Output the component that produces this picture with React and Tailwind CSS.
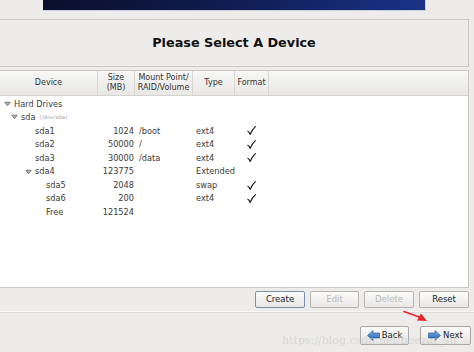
import React from "react";

const F = { fontFamily: '"DejaVu Sans", "Noto Sans", sans-serif' };

function Tri() {
  return (
    <svg width="7" height="6" viewBox="0 0 7 6" className="shrink-0">
      <path d="M0.8 1.2 L6.2 1.2 L3.5 4.8 Z" fill="#b5b5b5" stroke="#666" strokeWidth="0.8" strokeLinejoin="round" />
    </svg>
  );
}

function Check() {
  return (
    <svg width="9" height="9" viewBox="0 0 9 9">
      <path d="M0.8 5.2 C1.8 5.6 2.6 6.6 3.2 8.2 C4.6 5 6.2 2.6 8.4 0.6" fill="none" stroke="#111" strokeWidth="1.1" strokeLinecap="round" />
    </svg>
  );
}

const rows = [
  { tri: true, pad: 4, name: "Hard Drives" },
  { tri: true, pad: 11, name: "sda", sub: "(/dev/sda)" },
  { pad: 35, name: "sda1", size: "1024", mount: "/boot", type: "ext4", fmt: true },
  { pad: 35, name: "sda2", size: "50000", mount: "/", type: "ext4", fmt: true },
  { pad: 35, name: "sda3", size: "30000", mount: "/data", type: "ext4", fmt: true },
  { tri: true, pad: 25, name: "sda4", size: "123775", type: "Extended" },
  { pad: 46, name: "sda5", size: "2048", type: "swap", fmt: true },
  { pad: 46, name: "sda6", size: "200", type: "ext4", fmt: true },
  { pad: 46, name: "Free", size: "121524" },
];

function Btn({ children, disabled, focus, className = "" }) {
  return (
    <div
      className={`h-[17px] rounded-[2px] border flex items-center justify-center text-[8.5px] bg-gradient-to-b from-[#fbfbfa] to-[#e9e8e6] ${
        focus ? "border-[#7b8fa8]" : "border-[#b5b4b2]"
      } ${disabled ? "text-[#b9b8b6]" : "text-[#222]"} ${className}`}
    >
      {children}
    </div>
  );
}

function Arrow({ dir }) {
  return (
    <svg width="13" height="11" viewBox="0 0 13 11" className="shrink-0">
      <defs>
        <linearGradient id={"g" + dir} x1="0" y1="0" x2="0" y2="1">
          <stop offset="0" stopColor="#7fb0e6" />
          <stop offset="1" stopColor="#1f5fb0" />
        </linearGradient>
      </defs>
      {dir === "left" ? (
        <path d="M0.5 5.5 L6 0.5 L6 3 L12.5 3 L12.5 8 L6 8 L6 10.5 Z" fill={`url(#g${dir})`} stroke="#1d4f91" strokeWidth="0.6" />
      ) : (
        <path d="M12.5 5.5 L7 0.5 L7 3 L0.5 3 L0.5 8 L7 8 L7 10.5 Z" fill={`url(#g${dir})`} stroke="#1d4f91" strokeWidth="0.6" />
      )}
    </svg>
  );
}

export default function App() {
  return (
    <div className="w-[474px] h-[352px] bg-[#edecea] overflow-hidden flex flex-col relative" style={F}>
      {/* banner */}
      <div className="h-[11px] ml-[43px] w-[383px] bg-gradient-to-r from-[#0a0f2c] via-[#0f1d52] to-[#1a3388] border-r border-b border-[#c8d0e0]" />
      {/* title */}
      <div className="mt-[8px] h-[48px] mr-[5px] border border-l-0 border-[#c9c8c5] flex items-center justify-center">
        <span className="text-[12.8px] font-bold text-[#111]">Please Select A Device</span>
      </div>
      {/* table */}
      <div className="mt-[3px] h-[218px] mr-[5px] border border-l-0 border-[#c9c8c5] bg-white flex flex-col">
        <div className="h-[25px] flex bg-gradient-to-b from-[#f7f7f6] to-[#e8e7e5] border-b border-[#d4d3d0] text-[8px] text-[#333] leading-[10px]">
          <div className="w-[98px] border-r border-[#d6d5d2] flex items-center justify-center">Device</div>
          <div className="w-[37px] border-r border-[#d6d5d2] flex flex-col items-center justify-center text-center">
            <span>Size</span>
            <span>(MB)</span>
          </div>
          <div className="w-[58px] border-r border-[#d6d5d2] flex flex-col items-center justify-center text-center">
            <span>Mount Point/</span>
            <span>RAID/Volume</span>
          </div>
          <div className="w-[42px] border-r border-[#d6d5d2] flex items-center justify-center">Type</div>
          <div className="w-[34px] border-r border-[#d6d5d2] flex items-center justify-center">Format</div>
        </div>
        <div className="pt-[1px] text-[8.2px] text-[#3a3a3a]">
          {rows.map((r, i) => (
            <div key={i} className="h-[13.55px] flex items-center">
              <div className="w-[98px] flex items-center gap-[3px]" style={{ paddingLeft: r.pad }}>
                {r.tri && <Tri />}
                <span>{r.name}</span>
                {r.sub && <span className="text-[5.5px] text-[#aaa] ml-[1px]">{r.sub}</span>}
              </div>
              <div className="w-[36px] text-right">{r.size}</div>
              <div className="w-[62px] pl-[5px]">{r.mount}</div>
              <div className="w-[51px]">{r.type}</div>
              <div className="w-[12px] flex items-center">{r.fmt && <Check />}</div>
            </div>
          ))}
        </div>
      </div>
      {/* buttons row */}
      <div className="h-[24px] flex items-center justify-end gap-[5px] pr-[5px] border-b border-[#f8f8f7]">
        <Btn focus className="w-[50px]">Create</Btn>
        <Btn disabled className="w-[49px]">Edit</Btn>
        <Btn disabled className="w-[50px]">Delete</Btn>
        <Btn className="w-[50px]">Reset</Btn>
      </div>
      <div className="flex-1 border-t border-[#dcdbd8] flex items-start justify-end pt-[13px] pr-[3px] gap-[11px]">
        <div className="w-[49px] h-[19px] rounded-[2px] border border-[#a9a8a6] bg-gradient-to-b from-[#fbfbfa] to-[#e6e5e3] flex items-center justify-center gap-[2px] text-[8.5px] text-[#222]">
          <Arrow dir="left" />
          <span>Back</span>
        </div>
        <div className="w-[51px] h-[19px] rounded-[2px] border border-[#a9a8a6] bg-gradient-to-b from-[#fbfbfa] to-[#e6e5e3] flex items-center justify-center gap-[2px] text-[8.5px] text-[#222]">
          <Arrow dir="right" />
          <span>Next</span>
        </div>
      </div>
      {/* watermark */}
      <div
        className="absolute left-[282px] top-[333px] text-[11px] text-[#cfcecc] opacity-70 pointer-events-none"
        style={{ fontFamily: '"DejaVu Serif", "Liberation Serif", serif' }}
      >
        https://blog.csdn.net/beezar_su
      </div>
      {/* red arrow */}
      <svg className="absolute left-[403px] top-[310px]" width="28" height="14" viewBox="0 0 28 14">
        <path d="M1 1.5 L19 8" stroke="#e8262a" strokeWidth="1.6" strokeLinecap="round" />
        <path d="M14 10.5 L24 11 L18 3.5 Z" fill="#e8262a" />
      </svg>
    </div>
  );
}
